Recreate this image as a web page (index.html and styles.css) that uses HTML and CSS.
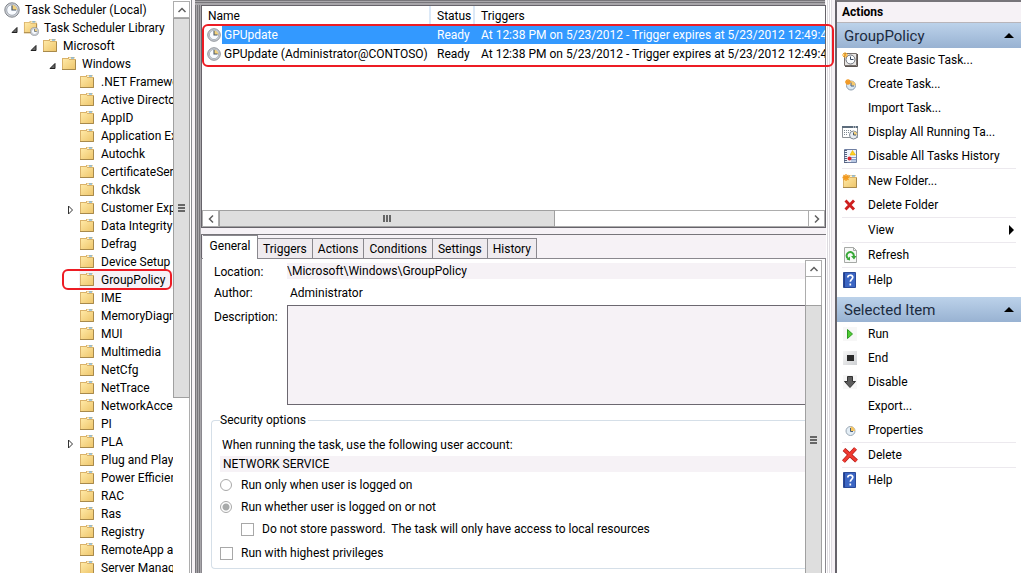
FILE: index.html
```
<!DOCTYPE html>
<html lang="en">
<head>
<meta charset="utf-8">
<title>Task Scheduler</title>
<link rel="stylesheet" href="styles.css">
</head>
<body>
<svg class="defs" aria-hidden="true">
  <defs>
    <linearGradient id="gold" x1="0" y1="0" x2="1" y2="1"><stop offset="0" stop-color="#ffe9a6"/><stop offset="1" stop-color="#eec66c"/></linearGradient>
    <linearGradient id="silver" x1="0" y1="0" x2="1" y2="1"><stop offset="0" stop-color="#f4f4f4"/><stop offset="1" stop-color="#b9bcc0"/></linearGradient>
  </defs>
  <symbol id="folder" viewBox="0 0 16 16">
    <path d="M1 14V2h6V1h7v2h1v11z" fill="#d9b26a"/>
    <path d="M8 1.500h6V3H8z" fill="#fff3d0"/><path d="M10 2h3" stroke="#4a9be0"/>
    <path d="M2 3h6v1h6v9H2z" fill="url(#gold)"/>
    <path d="M1 13.500h13.500V4" fill="none" stroke="#a88a4c"/>
  </symbol>
  <symbol id="clock" viewBox="0 0 16 16">
    <circle cx="8" cy="8" r="7.200" fill="#d0d3d8" stroke="#80858c"/>
    <circle cx="8" cy="8" r="5.300" fill="#f8fbff" stroke="#a4abb5"/>
    <path d="M8 8V3a5 5 0 0 1 5 5z" fill="#f3d27d"/>
    <path d="M8 3.500V8h4" fill="none" stroke="#46566b" stroke-width="1.200"/>
  </symbol>
  <symbol id="library" viewBox="0 0 16 16">
    <use href="#folder" width="15" height="15"/>
    <use href="#clock" x="7" y="7" width="9" height="9"/>
  </symbol>
  <symbol id="basic" viewBox="0 0 16 16">
    <path d="M2.500 1.500h12v12h-12z" fill="#e8e6e4" stroke="#77706c"/>
    <path d="M15.500 2v12.500H3" fill="none" stroke="#5a5350"/>
    <circle cx="8.500" cy="7.500" r="4.500" fill="#fbfdff" stroke="#6c7078"/>
    <path d="M8.500 4.500v3h3" fill="none" stroke="#34455c"/>
    <path d="M3 0v6M0 3h6M1 1l4 4M5 1L1 5" stroke="#f5a623"/>
  </symbol>
  <symbol id="create" viewBox="0 0 16 16">
    <circle cx="9" cy="9.500" r="4.500" fill="#d9e8f4" stroke="#8b9bae"/>
    <path d="M9 9.500V5a4.500 4.500 0 0 1 4.500 4.500z" fill="#f8c86c"/>
    <path d="M9 6.500V10h3" fill="none" stroke="#4a6078"/>
    <path d="M6 3v6M3 6h6M4 4l4 4M8 4L4 8" stroke="#f19a26" stroke-width="1.300"/>
  </symbol>
  <symbol id="running" viewBox="0 0 16 16">
    <path d="M.5 2.500h15v11H.5z" fill="#fff" stroke="#8b9095"/>
    <path d="M0 3h16" stroke="#5c6c7c" stroke-width="2"/><path d="M11 3h4" stroke="#fff" stroke-dasharray="1 1"/>
    <path d="M2 6.500h3M2 8.500h3M2 10.500h3M6 6.500h3M6 8.500h2" stroke="#7f8992" stroke-dasharray="1 1"/>
    <circle cx="11.500" cy="11" r="4" fill="#e8edf2" stroke="#7d8792"/>
    <path d="M11.500 11V7.500a3.500 3.500 0 0 1 3.500 3.500z" fill="#f6d27c"/>
    <path d="M11.500 8.500V11H14" fill="none" stroke="#4a5a6c"/>
  </symbol>
  <symbol id="history" viewBox="0 0 16 16">
    <path d="M2.500 1.500h12v13h-12z" fill="#eef3fb" stroke="#6f7fa2"/>
    <path d="M3.500 2v13" stroke="#56617e" stroke-dasharray="1 1" stroke-width="3"/>
    <path d="M9 11.500h5M9 9.500h5M9 13h5" stroke="#86a0cc"/>
    <path d="M10.500 2.500L8 7h5.500z" fill="#ffd021" stroke="#e5b000" stroke-width=".6"/>
    <circle cx="7.500" cy="10.500" r="2" fill="#d8262f"/>
  </symbol>
  <symbol id="newfolder" viewBox="0 0 16 16">
    <use href="#folder" y="1" width="16" height="16"/>
    <path d="M4 1v7M.5 4.500h7M1.500 2l5 5M6.500 2l-5 5" stroke="#f39a1e" stroke-width="1.300"/>
  </symbol>
  <symbol id="cross" viewBox="0 0 16 16">
    <path d="M3.500 3.500l8.500 9M12 3.500l-8.500 9" stroke="#ce1f1f" stroke-width="2.800"/>
  </symbol>
  <symbol id="bigcross" viewBox="0 0 16 16">
    <path d="M2 2.500l12.500 11.500M13.500 1.500L1.500 14.500" stroke="#a81616" stroke-width="4"/>
    <path d="M2 2.500l12.500 11.500M13.500 1.500L1.500 14.500" stroke="#f03b31" stroke-width="2.600"/>
  </symbol>
  <symbol id="refresh" viewBox="0 0 16 16">
    <path d="M2.500.5h9l3 3v12h-12z" fill="#f7f8f7" stroke="#a6a9a6"/><path d="M11.500.5v3h3" fill="none" stroke="#a6a9a6"/>
    <path d="M6 11.500A3.600 3.600 0 1 1 11.800 9" fill="none" stroke="#38a838" stroke-width="2"/>
    <path d="M9 9h5.500L12 12.500zM4.500 12.500l3.500-3v4z" fill="#38a838"/>
  </symbol>
  <symbol id="help" viewBox="0 0 16 16">
    <path d="M1.500.5h12v15h-12z" fill="#3c66c4" stroke="#2b4a99"/><path d="M2.500 1v14" stroke="#243f8c"/>
    <path d="M5.800 5.500c0-3 5-3 5-.2 0 2-2.500 2-2.500 4.400M8.300 11.500v2" fill="none" stroke="#fff" stroke-width="1.700"/>
  </symbol>
  <symbol id="run" viewBox="0 0 16 16">
    <path d="M1 1h14v14H1z" fill="#f7f7f7"/><path d="M5.500 3.500v9l5-4.500z" fill="#50cc34" stroke="#2d9a22"/>
  </symbol>
  <symbol id="end" viewBox="0 0 16 16">
    <path d="M1 1h14v14H1z" fill="url(#silver)" opacity=".7"/><path d="M5 5h7v6H5z" fill="#292929"/>
  </symbol>
  <symbol id="down" viewBox="0 0 16 16">
    <path d="M1 1h14v14H1z" fill="#f7f7f7"/><path d="M5.500 2.500h5v5h3L8 13.500 2.500 7.500h3z" fill="#5c5c5c" stroke="#333"/>
  </symbol>
  <symbol id="props" viewBox="0 0 16 16">
    <circle cx="8.500" cy="9" r="4.500" fill="#e3edf5" stroke="#9ba8b5"/>
    <path d="M8.500 9V4.500A4.500 4.500 0 0 1 13 9z" fill="#f8c55f"/><path d="M8.500 6v3.500H11" fill="none" stroke="#4a6078"/>
  </symbol>
  <symbol id="open" viewBox="0 0 8 8"><path d="M6 1.500v5H1z" fill="#666" stroke="#222"/></symbol>
  <symbol id="closed" viewBox="0 0 8 10"><path d="M1.500 1v8L5.500 5z" fill="#fff" stroke="#333"/></symbol>
  <symbol id="chev" viewBox="0 0 10 10"><path d="M1.500 7L5 3.500 8.500 7" fill="none" stroke="#606060" stroke-width="1.500"/></symbol>
</svg>

<div class="window">
  <nav class="tree-pane" aria-label="Console tree">
    <ul class="tree">
      <li class="node root"><svg class="icon"><use href="#clock"/></svg>Task Scheduler (Local)</li>
      <li class="node l1"><svg class="arrow"><use href="#open"/></svg><svg class="icon"><use href="#library"/></svg>Task Scheduler Library</li>
      <li class="node l2"><svg class="arrow"><use href="#open"/></svg><svg class="icon"><use href="#folder"/></svg>Microsoft</li>
      <li class="node l3"><svg class="arrow"><use href="#open"/></svg><svg class="icon"><use href="#folder"/></svg>Windows</li>
      <li class="node l4"><svg class="icon"><use href="#folder"/></svg>.NET Framework</li>
      <li class="node l4"><svg class="icon"><use href="#folder"/></svg>Active Directory</li>
      <li class="node l4"><svg class="icon"><use href="#folder"/></svg>AppID</li>
      <li class="node l4"><svg class="icon"><use href="#folder"/></svg>Application Experience</li>
      <li class="node l4"><svg class="icon"><use href="#folder"/></svg>Autochk</li>
      <li class="node l4"><svg class="icon"><use href="#folder"/></svg>CertificateServices</li>
      <li class="node l4"><svg class="icon"><use href="#folder"/></svg>Chkdsk</li>
      <li class="node l4"><svg class="arrow"><use href="#closed"/></svg><svg class="icon"><use href="#folder"/></svg>Customer Experience</li>
      <li class="node l4"><svg class="icon"><use href="#folder"/></svg>Data Integrity</li>
      <li class="node l4"><svg class="icon"><use href="#folder"/></svg>Defrag</li>
      <li class="node l4"><svg class="icon"><use href="#folder"/></svg>Device Setup</li>
      <li class="node l4 current"><svg class="icon"><use href="#folder"/></svg>GroupPolicy</li>
      <li class="node l4"><svg class="icon"><use href="#folder"/></svg>IME</li>
      <li class="node l4"><svg class="icon"><use href="#folder"/></svg>MemoryDiagnostic</li>
      <li class="node l4"><svg class="icon"><use href="#folder"/></svg>MUI</li>
      <li class="node l4"><svg class="icon"><use href="#folder"/></svg>Multimedia</li>
      <li class="node l4"><svg class="icon"><use href="#folder"/></svg>NetCfg</li>
      <li class="node l4"><svg class="icon"><use href="#folder"/></svg>NetTrace</li>
      <li class="node l4"><svg class="icon"><use href="#folder"/></svg>NetworkAccess</li>
      <li class="node l4"><svg class="icon"><use href="#folder"/></svg>PI</li>
      <li class="node l4"><svg class="arrow"><use href="#closed"/></svg><svg class="icon"><use href="#folder"/></svg>PLA</li>
      <li class="node l4"><svg class="icon"><use href="#folder"/></svg>Plug and Play</li>
      <li class="node l4"><svg class="icon"><use href="#folder"/></svg>Power Efficiency</li>
      <li class="node l4"><svg class="icon"><use href="#folder"/></svg>RAC</li>
      <li class="node l4"><svg class="icon"><use href="#folder"/></svg>Ras</li>
      <li class="node l4"><svg class="icon"><use href="#folder"/></svg>Registry</li>
      <li class="node l4"><svg class="icon"><use href="#folder"/></svg>RemoteApp and</li>
      <li class="node l4"><svg class="icon"><use href="#folder"/></svg>Server Manager</li>
    </ul>
    <div class="vscroll tree-scroll">
      <button class="sbtn" aria-label="Scroll up"><svg class="chev"><use href="#chev"/></svg></button>
      <div class="thumb"><span class="grip"></span></div>
      <div class="track"></div>
    </div>
  </nav>

  <main class="center">
    <section class="list">
      <div class="list-body">
        <table class="tasks">
          <thead><tr><th class="c-name">Name</th><th class="c-status">Status</th><th>Triggers</th></tr></thead>
          <tbody>
            <tr class="selected"><td><span class="task"><svg class="icon"><use href="#clock"/></svg><span class="task-name">GPUpdate</span></span></td><td>Ready</td><td>At 12:38 PM on 5/23/2012 - Trigger expires at 5/23/2012 12:49:47 PM</td></tr>
            <tr><td><span class="task"><svg class="icon"><use href="#clock"/></svg><span class="task-name">GPUpdate (Administrator@CONTOSO)</span></span></td><td>Ready</td><td>At 12:38 PM on 5/23/2012 - Trigger expires at 5/23/2012 12:49:47 PM</td></tr>
          </tbody>
        </table>
      </div>
      <div class="hscroll">
        <button class="sbtn" aria-label="Scroll left"><svg class="chev left"><use href="#chev"/></svg></button>
        <div class="thumb"><span class="grip"></span></div>
        <div class="track"></div>
        <button class="sbtn" aria-label="Scroll right"><svg class="chev right"><use href="#chev"/></svg></button>
      </div>
      <div class="callout"></div>
    </section>

    <section class="details">
      <div class="tabs" role="tablist">
        <button class="tab active" role="tab" aria-selected="true">General</button>
        <button class="tab" role="tab">Triggers</button>
        <button class="tab" role="tab">Actions</button>
        <button class="tab" role="tab">Conditions</button>
        <button class="tab" role="tab">Settings</button>
        <button class="tab" role="tab">History</button>
      </div>
      <div class="page">
        <form class="form">
          <div class="fields">
            <label for="location">Location:</label>
            <input class="field" id="location" readonly value="\Microsoft\Windows\GroupPolicy">
            <span>Author:</span>
            <span class="author">Administrator</span>
            <label class="top" for="description">Description:</label>
            <textarea class="description" id="description" readonly></textarea>
          </div>
          <fieldset class="security">
            <legend>Security options</legend>
            <label class="caption" for="account">When running the task, use the following user account:</label>
            <input class="field account" id="account" readonly value="NETWORK SERVICE">
            <label class="option"><input type="radio" name="logon" disabled>Run only when user is logged on</label>
            <label class="option"><input type="radio" name="logon" checked disabled>Run whether user is logged on or not</label>
            <label class="option sub"><input type="checkbox" disabled>Do not store password.&nbsp; The task will only have access to local resources</label>
            <label class="option last"><input type="checkbox" disabled>Run with highest privileges</label>
          </fieldset>
        </form>
        <div class="vscroll page-scroll">
          <button class="sbtn" aria-label="Scroll up"><svg class="chev"><use href="#chev"/></svg></button>
          <div class="track"></div>
          <div class="thumb"><span class="grip"></span></div>
        </div>
      </div>
    </section>
  </main>

  <aside class="actions">
    <h2 class="title">Actions</h2>
    <button class="group">GroupPolicy<span class="up"></span></button>
    <div class="items">
      <button class="item"><svg class="icon"><use href="#basic"/></svg>Create Basic Task...</button>
      <button class="item"><svg class="icon"><use href="#create"/></svg>Create Task...</button>
      <button class="item"><span class="icon"></span>Import Task...</button>
      <button class="item"><svg class="icon"><use href="#running"/></svg>Display All Running Ta...</button>
      <button class="item"><svg class="icon"><use href="#history"/></svg>Disable All Tasks History</button>
      <hr>
      <button class="item"><svg class="icon"><use href="#newfolder"/></svg>New Folder...</button>
      <button class="item"><svg class="icon"><use href="#cross"/></svg>Delete Folder</button>
      <hr>
      <button class="item"><span class="icon"></span>View<span class="more"></span></button>
      <hr>
      <button class="item"><svg class="icon"><use href="#refresh"/></svg>Refresh</button>
      <hr>
      <button class="item"><svg class="icon"><use href="#help"/></svg>Help</button>
    </div>
    <button class="group">Selected Item<span class="up"></span></button>
    <div class="items">
      <button class="item"><svg class="icon"><use href="#run"/></svg>Run</button>
      <button class="item"><svg class="icon"><use href="#end"/></svg>End</button>
      <button class="item"><svg class="icon"><use href="#down"/></svg>Disable</button>
      <button class="item"><span class="icon"></span>Export...</button>
      <button class="item"><svg class="icon"><use href="#props"/></svg>Properties</button>
      <hr>
      <button class="item"><svg class="icon"><use href="#bigcross"/></svg>Delete</button>
      <hr>
      <button class="item"><svg class="icon"><use href="#help"/></svg>Help</button>
    </div>
  </aside>
</div>
</body>
</html>
```
FILE: styles.css
```
*, *::before, *::after { box-sizing: border-box; }
body { margin: 0; font-family: Roboto, "Open Sans", sans-serif; font-size: 12px; line-height: 18px; color: #000; background: #f6f2f6; }
button, input, textarea { font: inherit; color: inherit; border: 0; padding: 0; margin: 0; background: none; border-radius: 0; }
.defs { position: absolute; width: 0; height: 0; }
.icon { width: 16px; height: 16px; flex: none; }
.window { display: grid; grid-template-columns: 195px minmax(0, 1fr) 186px; height: 100vh; overflow: hidden; }

/* Console tree */
.tree-pane { display: flex; min-height: 0; background: #fff; border-right: 3px solid #f6f2f6; box-shadow: inset -1px 0 #8a8a90; padding-top: 1px; }
.tree { flex: 1; min-width: 0; margin: 0; padding: 0; list-style: none; overflow: hidden; }
.node { display: flex; align-items: center; height: 18px; white-space: nowrap; position: relative; }
.node .icon { margin-right: 5px; }
.node .arrow { width: 8px; height: 10px; position: absolute; left: -12px; top: 6px; }
.root { padding-left: 4px; }
.l1 { margin-left: 23px; }
.l2 { margin-left: 42px; }
.l3 { margin-left: 61px; }
.l4 { margin-left: 79px; }
.l4 .icon { margin-right: 6px; }
.current { background: #f6f2f6; }
.current::after { content: ""; position: absolute; left: -17px; right: 1px; top: -2px; height: 21px; border: 2px solid #ed1c24; border-radius: 6px; }

/* Scroll bars */
.sbtn { width: 17px; height: 17px; flex: none; display: grid; place-items: center; background: #fff; border: 1px solid #adadad; }
.chev { width: 10px; height: 10px; }
.left { transform: rotate(-90deg); }
.right { transform: rotate(90deg); }
.vscroll { width: 17px; flex: none; display: flex; flex-direction: column; }
.thumb { display: grid; place-items: center; background: #dedede; border: 1px solid #a0a0a0; }
.track { flex: 1; background: #fff; }
.vscroll .track { border-right: 1px solid #adadad; }
.vscroll .grip { width: 7px; height: 8px; background: repeating-linear-gradient(#666 0 2px, transparent 2px 3px); }
.tree-scroll { margin-right: 2px; }
.tree-scroll .thumb { flex: 0 0 380px; }
.hscroll { display: flex; height: 17px; }
.hscroll .thumb { flex: 0 0 54%; }
.hscroll .track { border-top: 1px solid #adadad; border-bottom: 1px solid #adadad; }
.hscroll .grip { width: 8px; height: 7px; background: repeating-linear-gradient(90deg, #666 0 2px, transparent 2px 3px); }

/* Centre column */
.center { display: flex; flex-direction: column; min-width: 0; min-height: 0; padding: 5px 9px 0 6px; background: linear-gradient(#77757a 0 1px, #a8a6aa 1px 2px, #77757a 2px 3px, #a8a6aa 3px 5px, transparent 5px) left top / calc(100% - 10px) 5px no-repeat, linear-gradient(90deg, #77757a 0 1px, #a8a6aa 1px 2px, #77757a 2px 3px, #a8a6aa 3px 4px, #77757a 4px 5px, #a8a6aa 5px 6px) left top / 6px 100% no-repeat, repeating-linear-gradient(90deg, #fff 0 1px, #dedbe0 1px 2px) right 3px top / 6px 100% no-repeat, #f6f2f6; }
.list { position: relative; display: flex; flex-direction: column; flex: 0 0 223px; border: 1px solid #66636a; background: #fff; }
.list-body { flex: 1; overflow: hidden; }
.tasks { width: 100%; table-layout: fixed; border-collapse: collapse; white-space: nowrap; }
.tasks th, .tasks td { height: 19px; padding: 0 0 0 6px; text-align: left; font-weight: 400; overflow: hidden; }
.tasks th { border-left: 2px solid #dce9f7; }
.tasks th:first-child { border-left: 0; }
.tasks td { padding-left: 7px; }
.tasks td:first-child { padding-left: 5px; }
.tasks .c-name { width: 228px; }
.tasks .c-status { width: 44px; }
.task { display: flex; align-items: center; height: 19px; }
.task .icon { width: 14px; height: 14px; }
.task-name { flex: 1; padding-left: 3px; }
.selected td { background: #39f; color: #fff; }
.selected td:first-child { background: linear-gradient(90deg, #fff 0 20px, #39f 20px); }
.callout { position: absolute; left: 0; right: -9px; top: 18px; height: 43px; border: 2px solid #ed1c24; border-radius: 6px; }

/* Details */
.details { flex: 1; min-height: 0; margin-top: 6px; display: flex; flex-direction: column; border-top: 1px solid #77757a; }
.tabs { display: flex; align-items: flex-end; height: 23px; padding-left: 1px; border-left: 1px solid #66636a; }
.tab { height: 20px; padding: 0 5px; background: #efebef; border: 1px solid #8a888e; border-left-width: 0; border-bottom: 0; }
.tab.active { align-self: stretch; height: 24px; width: 55px; padding-bottom: 4px; background: #fff; z-index: 1; }
.page { flex: 1; min-height: 0; display: flex; background: #fff; border: 1px solid #8a888e; border-bottom: 0; padding: 1px 3px 0 0; }
.form { flex: 1; min-width: 0; overflow: hidden; padding: 3px 0 0 9px; }
.fields { display: grid; grid-template-columns: 73px 1fr; row-gap: 3px; padding-left: 3px; }
.field { height: 16px; line-height: 16px; width: 100%; background: #f6f2f6; }
.author { padding-left: 3px; }
.fields .top { padding-top: 3px; }
.description { height: 100px; width: 100%; display: block; resize: none; background: #f6f2f6; border: 1px solid #6c6870; border-right: 0; }
.security { margin: 6px 0 0; padding: 7px 0 4px 8px; min-width: 0; border: 1px solid #d5dfe8; border-right: 0; border-radius: 4px 0 0 4px; }
.security legend { padding: 0 2px 0 0; }
.caption { display: block; padding-left: 2px; }
.account { display: block; padding-left: 3px; margin: 2px 0; }
.option { display: flex; align-items: center; height: 22px; white-space: nowrap; }
.option input { appearance: none; width: 13px; height: 13px; margin-right: 8px; flex: none; border: 1px solid #a8a8a8; background: #fff; }
.option input[type="radio"] { width: 12px; height: 12px; margin-right: 9px; border-radius: 50%; }
.option input[type="radio"]:checked { background: radial-gradient(#a8aaaa 0 3px, #fff 4px); }
.sub { padding-left: 21px; }
.last { margin-top: 2px; }
.page-scroll .track { flex: 0 0 28px; border-left: 1px solid #adadad; }
.page-scroll .thumb { flex: 1; border-bottom: 0; }

/* Actions */
.actions { background: #fff; border-left: 2px solid #66636a; border-top: 2px solid #77757a; overflow: hidden; }
.title { margin: 0; height: 21px; padding-left: 5px; font-size: 12px; line-height: 20px; font-weight: 700; background: #f6f2f6; border-bottom: 1px solid #b8b5ba; }
.group { display: flex; align-items: center; width: 100%; height: 25px; padding: 0 7px; font-size: 15px; color: #1c2b3f; background: linear-gradient(#bcd2ea, #98b2d2); }
.up { margin-left: auto; border: 5px solid transparent; border-top: 0; border-bottom-color: #000; }
.items { padding-bottom: 5px; }
.item { display: flex; align-items: center; width: 100%; height: 24px; padding: 0 7px 0 5px; text-align: left; white-space: nowrap; }
.item .icon { margin-right: 10px; }
.more { margin-left: auto; border: 5px solid transparent; border-right: 0; border-left-color: #000; }
.items hr { height: 1px; margin: 0 5px; border: 0; background: #ece9ee; }
```
